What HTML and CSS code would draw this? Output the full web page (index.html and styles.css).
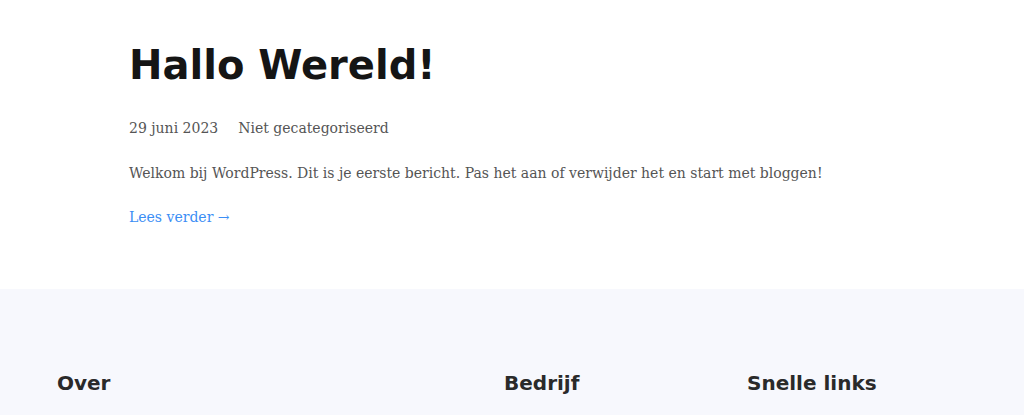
FILE: index.html
```html
<!DOCTYPE html>
<html lang="nl">
<head>
<meta charset="utf-8">
<title>Hallo Wereld!</title>
<link rel="stylesheet" href="styles.css">
</head>
<body>
<main class="content">
  <article class="post">
    <h1 class="post-title">Hallo Wereld!</h1>
    <div class="post-meta">
      <span class="post-date">29 juni 2023</span>
      <span class="post-cat">Niet gecategoriseerd</span>
    </div>
    <p class="post-excerpt">Welkom bij WordPress. Dit is je eerste bericht. Pas het aan of verwijder het en start met bloggen!</p>
    <a class="read-more" href="#">Lees verder →</a>
  </article>
</main>
<footer class="site-footer">
  <div class="footer-inner">
    <div class="footer-col"><h2 class="footer-title">Over</h2></div>
    <div class="footer-col"><h2 class="footer-title">Bedrijf</h2></div>
    <div class="footer-col"><h2 class="footer-title">Snelle links</h2></div>
  </div>
</footer>
</body>
</html>
```
FILE: styles.css
```css
html, body {
  margin: 0;
  padding: 0;
  background: #ffffff;
}
body {
  font-family: "DejaVu Serif", "Liberation Serif", serif;
  color: #555555;
}
.content {
  width: 766px;
  margin: 0 auto;
  padding: 40px 0 0;
  height: 289px;
  box-sizing: border-box;
}
.post-title {
  font-family: "DejaVu Sans", Inter, sans-serif;
  font-weight: 700;
  font-size: 40px;
  line-height: 50px;
  color: #151515;
  margin: 0 0 26px;
}
.post-meta {
  display: flex;
  gap: 20px;
  font-size: 14px;
  line-height: 24px;
  margin-bottom: 21px;
}
.post-excerpt {
  font-size: 14px;
  line-height: 24px;
  margin: 0 0 20px;
}
.read-more {
  font-size: 14px;
  line-height: 24px;
  color: #3b8ef5;
  text-decoration: none;
}
.site-footer {
  background: #f7f8fd;
  height: 126px;
}
.footer-inner {
  width: 910px;
  margin: 0 auto;
  padding-top: 81px;
  display: grid;
  grid-template-columns: 408px 204px 1fr;
  column-gap: 39px;
}
.footer-title {
  font-family: "DejaVu Sans", Inter, sans-serif;
  font-weight: 700;
  font-size: 20px;
  line-height: 26px;
  color: #2a2a2a;
  margin: 0;
}
```
